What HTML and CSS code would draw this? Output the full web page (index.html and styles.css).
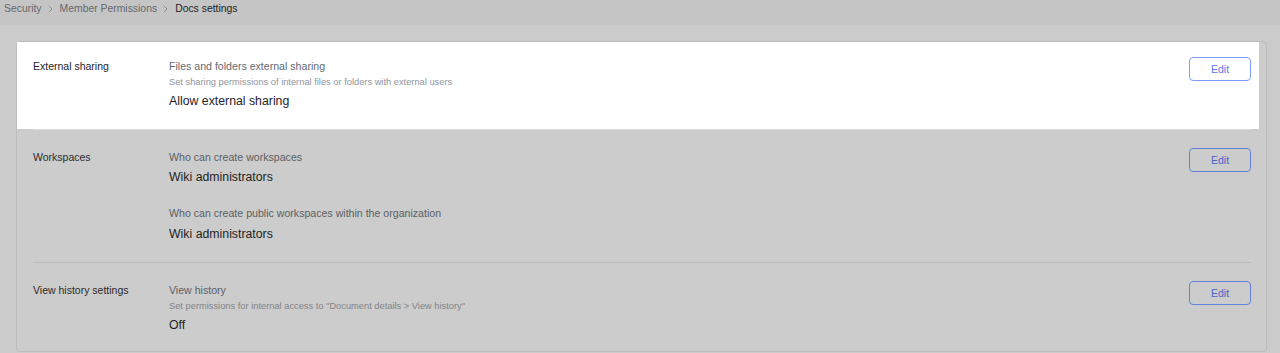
FILE: index.html
```html
<!DOCTYPE html>
<html lang="en">
<head>
<meta charset="utf-8">
<title>Docs settings</title>
<link rel="stylesheet" href="styles.css">
</head>
<body>
<div class="topbar">
  <nav class="crumbs">
    <span class="crumb">Security</span>
    <svg class="chev" width="5" height="8" viewBox="0 0 5 8"><path d="M0.8 0.8 L4 4 L0.8 7.2" fill="none" stroke="#8a8c90" stroke-width="1"/></svg>
    <span class="crumb">Member Permissions</span>
    <svg class="chev" width="5" height="8" viewBox="0 0 5 8"><path d="M0.8 0.8 L4 4 L0.8 7.2" fill="none" stroke="#8a8c90" stroke-width="1"/></svg>
    <span class="crumb current">Docs settings</span>
  </nav>
</div>
<main class="main">
  <section class="card">
    <div class="row row-first spot">
      <div class="row-inner">
        <div class="label">External sharing</div>
        <div class="fields">
          <div class="title">Files and folders external sharing</div>
          <div class="desc">Set sharing permissions of internal files or folders with external users</div>
          <div class="value">Allow external sharing</div>
        </div>
        <button class="edit">Edit</button>
      </div>
    </div>
    <div class="row">
      <div class="row-inner">
        <div class="label">Workspaces</div>
        <div class="fields">
          <div class="title">Who can create workspaces</div>
          <div class="value v-tight">Wiki administrators</div>
          <div class="title group-gap">Who can create public workspaces within the organization</div>
          <div class="value">Wiki administrators</div>
        </div>
        <button class="edit">Edit</button>
      </div>
    </div>
    <div class="row row-last">
      <div class="row-inner">
        <div class="label">View history settings</div>
        <div class="fields">
          <div class="title">View history</div>
          <div class="desc">Set permissions for internal access to "Document details &gt; View history"</div>
          <div class="value">Off</div>
        </div>
        <button class="edit">Edit</button>
      </div>
    </div>
  </section>
</main>
</body>
</html>
```
FILE: styles.css
```css
* { box-sizing: border-box; }
html, body { margin: 0; padding: 0; }
body {
  background: #cbcbcb;
  font-family: "Liberation Sans", Arial, sans-serif;
  color: #262626;
  width: 1280px;
  height: 353px;
  overflow: hidden;
}
.topbar {
  height: 25px;
  background: #c5c5c5;
  padding: 0 0 0 4px;
  display: flex;
  align-items: center;
}
.crumbs {
  display: flex;
  align-items: center;
  font-size: 10.4px;
  line-height: 16px;
  margin-top: -8px;
  height: 16px;
}
.crumb { color: #65686d; }
.crumb.current { color: #1e1f22; }
.chev { margin: 0 7px 0 6px; }
.main {
  padding: 16px 13px 0 16px;
}
.card {
  background: #cccccc;
  border: 1px solid #bcbcbc;
  border-radius: 4px;
  height: 311px;
}
.row { position: relative; z-index: 0; }
.row-inner {
  display: flex;
  align-items: flex-start;
  margin: 0 15px 0 16px;
  padding: 18px 0 18px;
  border-bottom: 1px solid #bdbdbd;
}
.row-first .row-inner { padding-top: 15px; border-bottom-color: #d9d9d9; }
.row-last .row-inner { border-bottom: none; padding-bottom: 15px; }
.spot::before {
  content: "";
  position: absolute;
  left: 0;
  right: 7px;
  top: 0;
  bottom: 1px;
  background: #ffffff;
  z-index: -1;
}
.label {
  width: 136px;
  flex: none;
  font-size: 10.5px;
  line-height: 18px;
  color: #2b2b2b;
}
.fields { flex: 1; }
.title {
  font-size: 10.6px;
  line-height: 18px;
  color: #5c5f64;
}
.desc {
  font-size: 9.3px;
  line-height: 14px;
  color: #82858a;
}
.value {
  margin-top: 2px;
  font-size: 12.3px;
  line-height: 20px;
  color: #1f1f1f;
}
.v-tight { margin-top: 1px; }
.group-gap { margin-top: 17px; }
.edit {
  flex: none;
  width: 62px;
  height: 24px;
  border: 1px solid #6382dc;
  border-radius: 4px;
  background: transparent;
  color: #4b64c8;
  font-family: "Liberation Sans", Arial, sans-serif;
  font-size: 10.5px;
  padding: 0;
  cursor: pointer;
}
.spot .label { color: #1f2329; }
.spot .title { color: #646a73; }
.spot .desc { color: #8f959e; }
.spot .value { color: #1f2329; }
.spot .edit { border-color: #7e9cff; color: #5a76ee; }
```
